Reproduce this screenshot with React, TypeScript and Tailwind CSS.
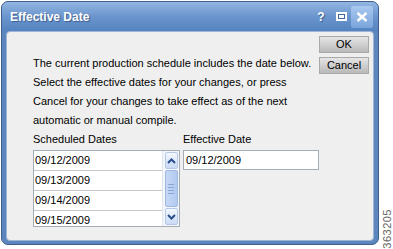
import React from 'react';

const dates = ['09/12/2009', '09/13/2009', '09/14/2009', '09/15/2009'];

const font = "font-['Liberation_Sans',Arial,sans-serif]";

const Chevron: React.FC<{ up?: boolean }> = ({ up }) => (
  <svg width="9" height="6" viewBox="0 0 9 6">
    <path
      d={up ? 'M1 5 L4.5 1.5 L8 5' : 'M1 1 L4.5 4.5 L8 1'}
      fill="none"
      stroke="#2b4f8c"
      strokeWidth="2"
    />
  </svg>
);

const ScrollBar: React.FC = () => (
  <div className="w-[17px] flex flex-col items-center bg-[#f3f6fb] border-l border-[#dfe6f0] pt-[1px] pb-[1px] gap-[1px]">
    <div className="w-[13px] h-[17px] flex items-center justify-center rounded-[2px] border border-[#b6c8e6] bg-gradient-to-b from-[#f4f8ff] to-[#c9daf5]">
      <Chevron up />
    </div>
    <div className="w-[13px] flex-1 flex flex-col items-center justify-center gap-[2px] rounded-[2px] border border-[#9eb8e2] bg-gradient-to-r from-[#c6d8f6] to-[#b2caf0]">
      <div className="w-[6px] h-px bg-[#8aa6d6]" />
      <div className="w-[6px] h-px bg-[#8aa6d6]" />
      <div className="w-[6px] h-px bg-[#8aa6d6]" />
      <div className="w-[6px] h-px bg-[#8aa6d6]" />
    </div>
    <div className="w-[13px] h-[17px] flex items-center justify-center rounded-[2px] border border-[#b6c8e6] bg-gradient-to-b from-[#f4f8ff] to-[#c9daf5]">
      <Chevron />
    </div>
  </div>
);

const DialogButton: React.FC<{ label: string }> = ({ label }) => (
  <button className="w-[50px] h-[17px] flex items-center justify-center border border-[#a9a9a9] bg-gradient-to-b from-[#e6e6e6] via-[#cfcfcf] to-[#b9b9b9] text-[11px] text-black leading-none">
    {label}
  </button>
);

export default function App() {
  return (
    <div className={`w-[393px] h-[249px] bg-white flex ${font}`}>
      {/* Window */}
      <div className="mt-[1px] ml-[1px] w-[380px] h-[244px] flex flex-col rounded-[7px] border border-[#3f5f8c] bg-[#5d86be] overflow-hidden">
        {/* Title bar */}
        <div className="h-[29px] flex items-center pl-[8px] pr-[5px] bg-gradient-to-b from-[#93b6e2] via-[#6b95cd] to-[#5483c0]">
          <span className="text-[12px] font-bold text-white [text-shadow:1px_1px_1px_#3a5c8c]">Effective Date</span>
          <div className="ml-auto flex items-center h-full">
            <span className="w-[14px] text-center text-[12px] font-bold text-white [text-shadow:1px_1px_1px_#3a5c8c]">?</span>
            <div className="ml-[8px] w-[11px] h-[9px] border-2 border-white bg-[#3f67a3] flex items-center justify-center">
              <div className="w-[5px] h-[3px] bg-white" />
            </div>
            <div className="ml-[4px] w-[22px] h-[22px] flex items-center justify-center bg-gradient-to-b from-[#a9c8ef] to-[#7aa5db] rounded-[2px]">
              <svg width="12" height="10" viewBox="0 0 12 10">
                <path d="M1.5 1 L10.5 9 M10.5 1 L1.5 9" stroke="white" strokeWidth="2.4" />
              </svg>
            </div>
          </div>
        </div>

        {/* Body */}
        <div className="flex-1 flex px-[4px] pb-[3px]">
          <div className="flex-1 flex rounded-[4px] border border-[#9fb5d6] bg-[#efefef]">
            {/* Main column */}
            <div className="flex-1 pl-[26px] pt-[22px] text-[11px] text-black">
              <p className="leading-[19px]">
                The current production schedule includes the date below.
                <br />
                Select the effective dates for your changes, or press
                <br />
                Cancel for your changes to take effect as of the next
                <br />
                automatic or manual compile.
              </p>
              <div className="flex gap-[3px]">
                <div className="w-[147px]">
                  <div className="leading-[18px]">Scheduled Dates</div>
                  <div className="mt-[2px] h-[77px] flex border border-[#a5acb5] bg-white overflow-hidden">
                    <div className="flex-1 flex flex-col">
                      {dates.map(d => (
                        <div key={d} className="h-[20px] shrink-0 flex items-center pl-[1px] border-b border-[#c6c6c6]">
                          {d}
                        </div>
                      ))}
                    </div>
                    <ScrollBar />
                  </div>
                </div>
                <div>
                  <div className="leading-[18px]">Effective Date</div>
                  <div className="mt-[2px] w-[136px] h-[20px] flex items-center pl-[2px] border border-[#a5acb5] bg-white">
                    09/12/2009
                  </div>
                </div>
              </div>
            </div>

            {/* Buttons */}
            <div className="pt-[4px] pr-[4px] flex flex-col gap-[4px]">
              <DialogButton label="OK" />
              <DialogButton label="Cancel" />
            </div>
          </div>
        </div>
      </div>

      {/* Figure number */}
      <div className="flex-1 flex items-end justify-center pl-[3px]">
        <span className="[writing-mode:vertical-rl] rotate-180 text-[11px] leading-none text-[#666] tracking-[0.5px]">363205</span>
      </div>
    </div>
  );
}
